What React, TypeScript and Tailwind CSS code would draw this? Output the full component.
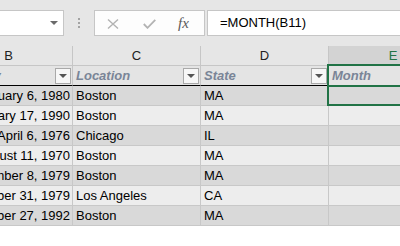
const rows = [
  { b: 'January 6, 1980', c: 'Boston', d: 'MA' },
  { b: 'February 17, 1990', c: 'Boston', d: 'MA' },
  { b: 'April 6, 1976', c: 'Chicago', d: 'IL' },
  { b: 'August 11, 1970', c: 'Boston', d: 'MA' },
  { b: 'November 8, 1979', c: 'Boston', d: 'MA' },
  { b: 'October 31, 1979', c: 'Los Angeles', d: 'CA' },
  { b: 'October 27, 1992', c: 'Boston', d: 'MA' },
]

const headers = ['Birthday', 'Location', 'State', 'Month']

function FilterButton() {
  return (
    <span className="flex h-[16px] w-[16px] shrink-0 items-center justify-center border border-[#a9a9a9] bg-[#f7f7f7]">
      <span className="h-0 w-0 border-x-[4px] border-t-[4px] border-x-transparent border-t-[#555]" />
    </span>
  )
}

export default function App() {
  return (
    <div className="relative h-[246px] w-[400px] overflow-hidden bg-white font-['Liberation_Sans',Arial,sans-serif] text-[13px] text-black">
      {/* Formula bar */}
      <div className="flex h-[46px] items-start bg-[#e6e6e6] pt-[10px]">
        <div className="-ml-[10px] flex h-[26px] w-[74px] shrink-0 items-center justify-end border border-[#c6c6c6] bg-white pr-[5px]">
          <span className="h-0 w-0 border-x-[4px] border-t-[4px] border-x-transparent border-t-[#6a6a6a]" />
        </div>
        <div className="ml-[14px] mt-[8px] flex flex-col gap-[2px]">
          <span className="h-[2px] w-[2px] bg-[#a3a3a3]" />
          <span className="h-[2px] w-[2px] bg-[#a3a3a3]" />
          <span className="h-[2px] w-[2px] bg-[#a3a3a3]" />
        </div>
        <div className="ml-[14px] flex h-[26px] w-[111px] shrink-0 items-center border border-[#c6c6c6] bg-[#fdfdfd]">
          <svg className="ml-[12px] mt-[1px]" width="12" height="10" viewBox="0 0 12 10">
            <path d="M1 0.5 L11 9.5 M11 0.5 L1 9.5" stroke="#b3b3b3" strokeWidth="1.4" fill="none" />
          </svg>
          <svg className="ml-[24px] mt-[1px]" width="13" height="10" viewBox="0 0 13 10">
            <path d="M0.8 5 L4.5 8.8 L12.3 0.8" stroke="#b3b3b3" strokeWidth="1.8" fill="none" />
          </svg>
          <span className="ml-[22px] font-['Liberation_Serif',serif] text-[15px] italic leading-none text-[#5a5a5a]">fx</span>
        </div>
        <div className="-mr-[2px] ml-[2px] flex h-[26px] flex-1 items-center border border-[#c6c6c6] bg-white pl-[12px]">
          =MONTH(B11)
        </div>
      </div>

      {/* Column letters */}
      <div className="-ml-[55px] flex h-[20px] bg-[#e6e6e6] text-[#222]">
        {['B', 'C', 'D'].map((l) => (
          <div key={l} className="flex w-[128px] shrink-0 items-center justify-center border-r border-b border-[#c6c6c6]">
            {l}
          </div>
        ))}
        <div className="flex w-[128px] shrink-0 items-center justify-center border-b-2 border-[#217346] bg-[#d3d3d3] pt-[2px] text-[#217346]">
          E
        </div>
      </div>

      {/* Table header */}
      <div className="-ml-[55px] flex h-[20px]">
        {headers.map((h) => (
          <div
            key={h}
            className="flex w-[128px] shrink-0 items-center justify-between border-r border-b border-r-[#c6c6c6] border-b-black bg-[#e4e4e4] pl-[3px] pr-[1px] font-bold italic text-[#7a8597]"
          >
            <span className="whitespace-nowrap">{h}</span>
            <FilterButton />
          </div>
        ))}
      </div>

      {/* Rows */}
      {rows.map((r, i) => (
        <div key={i} className={i % 2 === 0 ? '-ml-[55px] flex h-[20px] bg-[#d9d9d9]' : '-ml-[55px] flex h-[20px] bg-[#ededed]'}>
          <div className="flex w-[128px] shrink-0 items-center justify-end overflow-hidden whitespace-nowrap border-r border-b border-[#c8c8c8] pr-[2px] pt-[1px]">
            {r.b}
          </div>
          <div className="flex w-[128px] shrink-0 items-center whitespace-nowrap border-r border-b border-[#c8c8c8] pl-[3px] pt-[1px]">
            {r.c}
          </div>
          <div className="flex w-[128px] shrink-0 items-center whitespace-nowrap border-r border-b border-[#c8c8c8] pl-[3px] pt-[1px]">
            {r.d}
          </div>
          <div className="w-[128px] shrink-0 border-r border-b border-[#c8c8c8]" />
        </div>
      ))}

      {/* Active cell selection */}
      <div className="absolute left-[327px] top-[64px] h-[22px] w-[2px] bg-[#217346]" />
      <div className="absolute left-[327px] top-[85px] h-[21px] w-[80px] border-2 border-[#217346]" />
    </div>
  )
}
